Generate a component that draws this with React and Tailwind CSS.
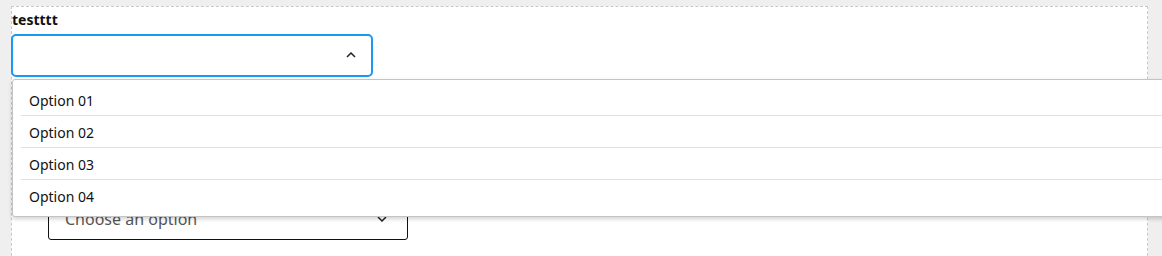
import React from "react";

export default function App() {
  const options = ["Option 01", "Option 02", "Option 03", "Option 04"];
  return (
    <div className="w-[1162px] h-[256px] overflow-hidden bg-[#efefef] pl-[11px] pt-[6px] relative" style={{ fontFamily: '"Noto Sans", "Open Sans", sans-serif' }}>
      <div className="w-[1137px] h-[260px] bg-white border border-dashed border-[#c8c8c8] border-b-0">
        <div className="text-[14px] font-bold leading-[20px] text-[#111] pt-[3px]">testttt</div>
        <div className="mt-[4px] w-[362px] h-[43px] -ml-px border-2 border-[#1a98f4] rounded-[5px] flex items-center justify-end pr-[16px]">
          <svg width="10" height="6" viewBox="0 0 10 6" className="mt-[-1px] mr-[-1px]">
            <path d="M1 5 L5 1 L9 5" fill="none" stroke="#222" strokeWidth="1.5" />
          </svg>
        </div>
        <div className="mt-[120px] ml-[36px] w-[360px] h-[43px] border border-[#111] rounded-[3px] flex items-center justify-between pl-[16px] pr-[20px] text-[16px] text-[#555]">
          <span>Choose an option</span>
          <svg width="10" height="6" viewBox="0 0 10 6">
            <path d="M1 1 L5 5 L9 1" fill="none" stroke="#222" strokeWidth="1.5" />
          </svg>
        </div>
      </div>
      <div className="absolute left-[12px] top-[79px] w-[1160px] bg-white border border-[#c4c4c4] rounded-[3px] shadow-[0_2px_4px_rgba(0,0,0,0.18)] px-[8px] py-[4px]">
        {options.map((o, i) => (
          <div
            key={o}
            className={`h-[32px] px-[8px] pt-[1px] flex items-center text-[14px] text-[#111] ${i < options.length - 1 ? "border-b border-[#e2e2e2]" : ""}`}
          >
            {o}
          </div>
        ))}
      </div>
    </div>
  );
}
